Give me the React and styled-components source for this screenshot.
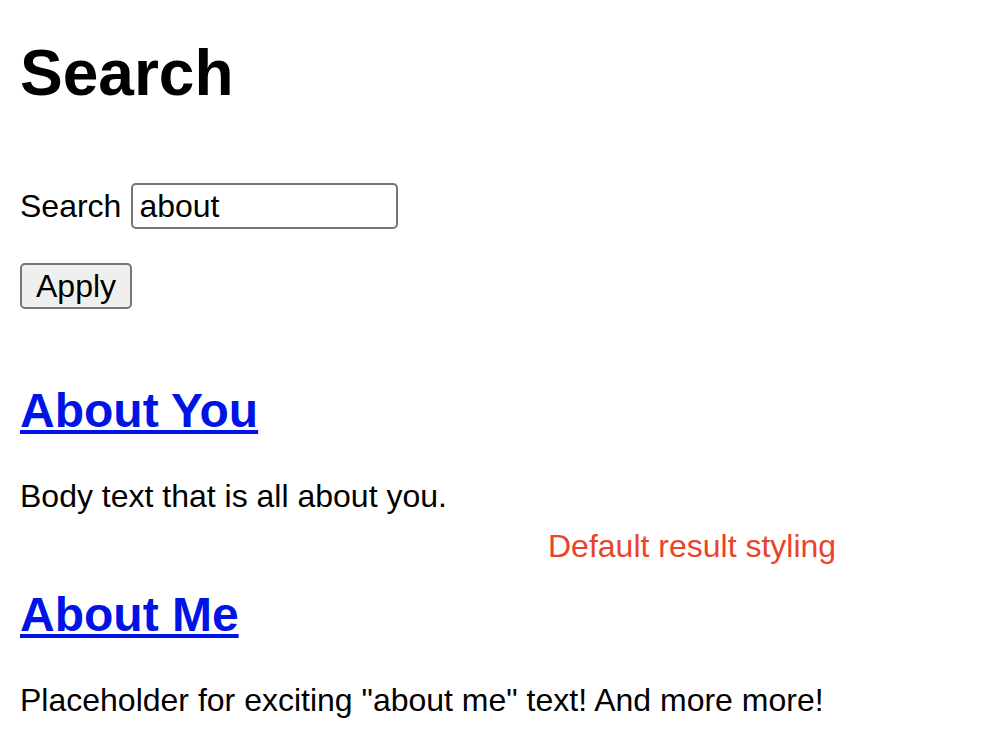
import React from 'react';
import styled, { createGlobalStyle } from 'styled-components';

const results = [
  {
    title: 'About You',
    body: 'Body text that is all about you.',
    note: 'Default result styling',
  },
  {
    title: 'About Me',
    body: 'Placeholder for exciting "about me" text! And more more!',
  },
];

const App = () => {
  return (
    <>
      <GlobalStyle />
      <Page>
        <Title>Search</Title>
        <SearchForm onSubmit={(e) => e.preventDefault()}>
          <FieldRow>
            <Label htmlFor="q">Search</Label>
            <SearchInput id="q" type="text" defaultValue="about" />
          </FieldRow>
          <ApplyButton type="submit">Apply</ApplyButton>
        </SearchForm>
        <Results>
          {results.map((r) => (
            <Result key={r.title}>
              <ResultTitle>
                <a href="#">{r.title}</a>
              </ResultTitle>
              <ResultBody>{r.body}</ResultBody>
              {r.note && <Note>{r.note}</Note>}
            </Result>
          ))}
        </Results>
      </Page>
    </>
  );
};

const GlobalStyle = createGlobalStyle`
* {
  box-sizing: border-box;
}

body {
  margin: 0;
  background: #ffffff;
  color: #000000;
  font-family: "Liberation Sans", Arial, sans-serif;
  font-size: 32px;
}
`;

const Page = styled.div`
  padding: 0 20px;
`;

const Title = styled.h1`
  margin: 36px 0 0;
  font-size: 64px;
  font-weight: 700;
  line-height: 74px;
`;

const SearchForm = styled.form`
  margin-top: 73px;
`;

const FieldRow = styled.div`
  display: flex;
  align-items: center;
  gap: 10px;
  height: 46px;
`;

const Label = styled.label`
  font-size: 32px;
  line-height: 37px;
`;

const SearchInput = styled.input`
  width: 267px;
  height: 46px;
  padding: 0 6px;
  border: 2px solid #767676;
  border-radius: 5px;
  font-family: inherit;
  font-size: 32px;
  color: #000000;
  background: #ffffff;
  outline: none;
`;

const ApplyButton = styled.button`
  display: block;
  margin-top: 34px;
  height: 46px;
  padding: 0 14px;
  border: 2px solid #767676;
  border-radius: 5px;
  background: #efefef;
  font-family: inherit;
  font-size: 32px;
  line-height: 37px;
  color: #000000;
`;

const Results = styled.div`
  margin-top: 74px;
`;

const Result = styled.section`
  & + & {
    margin-top: 22px;
  }
`;

const ResultTitle = styled.h2`
  margin: 0 0 40px;
  font-size: 48px;
  font-weight: 700;
  line-height: 55px;

  a {
    color: #0014e6;
    text-decoration: underline;
  }
`;

const ResultBody = styled.p`
  margin: 0;
  font-size: 32px;
  line-height: 37px;
`;

const Note = styled.p`
  margin: 13px 0 0 528px;
  font-size: 32px;
  line-height: 37px;
  color: #e9432c;
`;

export default App;
